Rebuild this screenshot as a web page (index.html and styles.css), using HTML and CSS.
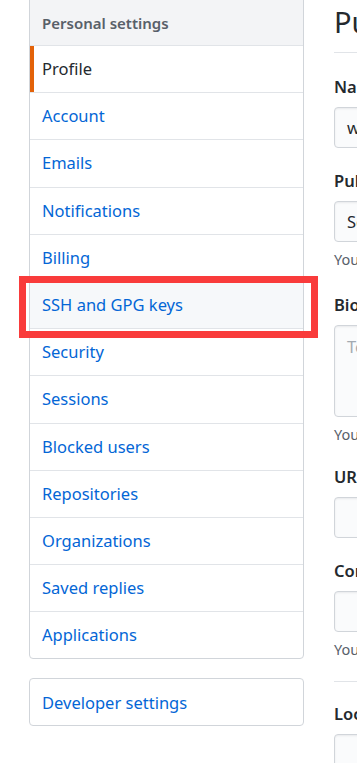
FILE: index.html
```html
<!DOCTYPE html>
<html lang="en">
<head>
<meta charset="utf-8">
<title>Public profile</title>
<link rel="stylesheet" href="styles.css">
</head>
<body>
<div class="page">
  <nav class="sidebar">
    <div class="menu">
      <div class="menu-heading">Personal settings</div>
      <a class="menu-item selected" href="#">Profile</a>
      <a class="menu-item" href="#">Account</a>
      <a class="menu-item" href="#">Emails</a>
      <a class="menu-item" href="#">Notifications</a>
      <a class="menu-item" href="#">Billing</a>
      <a class="menu-item hovered" href="#">SSH and GPG keys<span class="highlight"></span></a>
      <a class="menu-item" href="#">Security</a>
      <a class="menu-item" href="#">Sessions</a>
      <a class="menu-item" href="#">Blocked users</a>
      <a class="menu-item" href="#">Repositories</a>
      <a class="menu-item" href="#">Organizations</a>
      <a class="menu-item" href="#">Saved replies</a>
      <a class="menu-item last" href="#">Applications</a>
    </div>
    <div class="menu dev">
      <a class="menu-item last" href="#">Developer settings</a>
    </div>
  </nav>
  <main class="content">
    <h2 class="subhead">Public profile</h2>
    <div class="group first">
      <label class="label">Name</label>
      <div class="input">wangqiang</div>
    </div>
    <div class="group">
      <label class="label">Public email</label>
      <div class="input">Select a verified email to display</div>
      <p class="note">You can manage verified email addresses in your email settings.</p>
    </div>
    <div class="group bio-group">
      <label class="label">Bio</label>
      <div class="input textarea placeholder">Tell us a little bit about yourself</div>
      <p class="note">You can @mention other users and organizations to link to them.</p>
    </div>
    <div class="group">
      <label class="label">URL</label>
      <div class="input"></div>
    </div>
    <div class="group">
      <label class="label">Company</label>
      <div class="input"></div>
      <p class="note">You can @mention your company's GitHub organization to link it.</p>
    </div>
    <hr class="divider">
    <div class="group loc">
      <label class="label">Location</label>
      <div class="input"></div>
    </div>
  </main>
</div>
</body>
</html>
```

FILE: styles.css
```css
html, body {
  margin: 0;
  padding: 0;
  overflow: hidden;
  background: #ffffff;
}

body {
  font-family: "Noto Sans", "Open Sans", sans-serif;
  color: #24292e;
  width: 357px;
  height: 763px;
}

.page {
  display: flex;
  width: 700px;
  padding-left: 29px;
  gap: 30px;
}

.sidebar {
  flex: 0 0 275px;
  display: flex;
  flex-direction: column;
  gap: 19px;
}

.menu {
  border: 1px solid #d1d5da;
  border-radius: 4px;
  background: #ffffff;
  display: flex;
  flex-direction: column;
}

.menu:first-child {
  margin-top: -1px;
  border-top-left-radius: 0;
  border-top-right-radius: 0;
}

.menu-heading {
  height: 46px;
  box-sizing: border-box;
  padding: 0 12px;
  display: flex;
  align-items: center;
  background: #f3f4f6;
  border-bottom: 1px solid #e1e4e8;
  color: #586069;
  font-size: 15px;
  font-weight: 600;
}

.menu-item {
  position: relative;
  display: block;
  padding: 12.1px 12px;
  line-height: 22px;
  font-size: 16.5px;
  color: #0366d6;
  text-decoration: none;
  border-bottom: 1px solid #e1e4e8;
}

.menu-item.last {
  border-bottom: 0;
}

.menu.dev .menu-item {
  padding: 12.5px 12px 11.5px;
}

.menu-item.selected {
  color: #24292e;
  font-weight: 400;
  box-shadow: inset 4px 0 0 #e36209;
}

.menu-item.hovered {
  background: #f6f8fa;
}

.highlight {
  position: absolute;
  left: -11px;
  right: -15px;
  top: -6px;
  bottom: -10px;
  border: 7px solid #f93b3b;
  pointer-events: none;
}

.content {
  flex: 0 0 360px;
}

.subhead {
  margin: 0;
  padding: 3px 0 12px;
  font-size: 29px;
  line-height: 37px;
  font-weight: 400;
  border-bottom: 1px solid #e1e4e8;
  white-space: nowrap;
}

.group {
  margin-top: 21px;
}

.group.first {
  margin-top: 22px;
}

.group.bio-group {
  margin-top: 24px;
}

.label {
  display: block;
  font-size: 16.5px;
  font-weight: 600;
  line-height: 24px;
  margin-bottom: 8px;
}

.input {
  box-sizing: border-box;
  height: 41px;
  padding: 0 12px;
  display: flex;
  align-items: center;
  background: #fafbfc;
  border: 1px solid #d1d5da;
  border-radius: 4px;
  font-size: 16.5px;
  white-space: nowrap;
  box-shadow: inset 0 1px 2px rgba(27, 31, 35, 0.075);
}

.textarea {
  height: 92px;
  align-items: flex-start;
  padding-top: 9px;
}

.placeholder {
  color: #a3aab1;
}

.note {
  margin: 7px 0 0;
  font-size: 14.5px;
  line-height: 20px;
  color: #586069;
  white-space: nowrap;
}

.divider {
  margin: 22px 0 0;
  border: 0;
  border-top: 1px solid #e1e4e8;
  height: 0;
}

.group.loc {
  margin-top: 20px;
}
```
